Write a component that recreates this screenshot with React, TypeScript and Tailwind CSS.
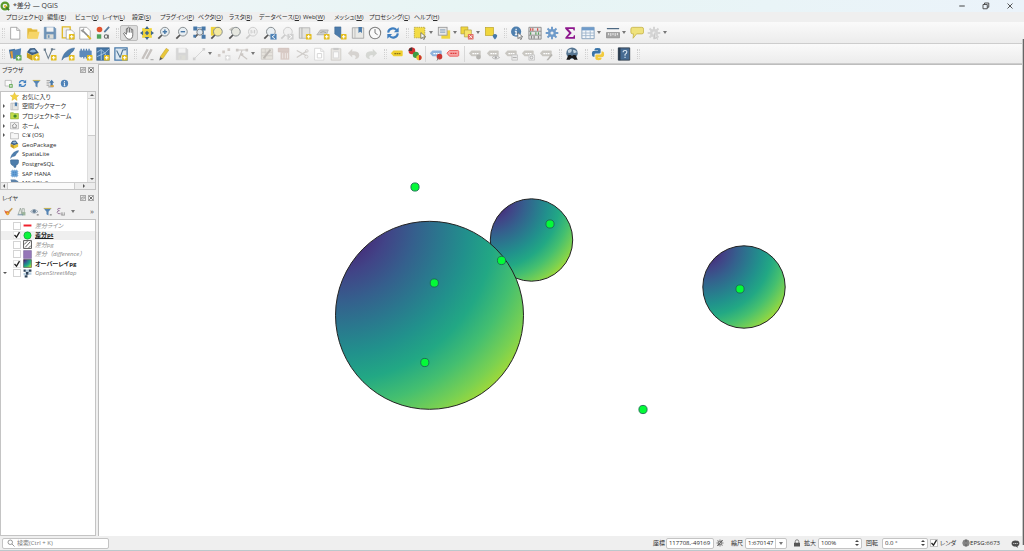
import type { ReactNode } from "react";
import { clsx } from "clsx";

/* ---------- icon primitives ---------- */

function Svg({ children, className = "size-3.5" }: { children: ReactNode; className?: string }) {
  return (
    <svg viewBox="0 0 16 16" className={clsx("block shrink-0", className)} fill="none" aria-hidden="true">
      {children}
    </svg>
  );
}

// yellow "create" badge in the lower right corner
const Badge = ({ color = "#e3bd1f" }: { color?: string }) => (
  <>
    <rect x="9" y="9" width="6.5" height="6.5" rx="1" fill={color} />
    <path d="M12.2 10.2v4M10.2 12.2h4" stroke="#fff" strokeWidth="1.2" />
  </>
);

const Lens = ({ fill = "#e8eef2", stroke = "#858b8f", handle = "#555" }) => (
  <>
    <path d="M6 10 1.5 14.5" stroke={handle} strokeWidth="2" />
    <circle cx="9" cy="6.5" r="5" fill={fill} stroke={stroke} strokeWidth="1.1" />
  </>
);

const Cursor = () => <path d="M9 7.5v7l1.8-1.6 1.3 2.6 1.2-.6-1.2-2.5h2.4z" fill="#fff" stroke="#555" strokeWidth=".8" />;

const Gear = ({ color }: { color: string }) => (
  <>
    <circle cx="8" cy="8" r="4.6" fill={color} />
    <path
      d="M8 .8v14.4M.8 8h14.4M2.9 2.9l10.2 10.2M13.1 2.9 2.9 13.1"
      stroke={color}
      strokeWidth="2.2"
    />
    <circle cx="8" cy="8" r="1.8" fill="#eee" />
  </>
);

const Tag = ({ color = "#c9c7c2", text = "#fff" }) => (
  <>
    <path d="M1 7 4 4h9.500q1 0 1 1v4.500q0 1-1 1H4z" fill={color} />
    <path d="M5 7.500h7" stroke={text} strokeWidth="1.500" strokeDasharray="2 .6" />
  </>
);

const Refresh = () => (
  <g stroke="#3f7fc0" strokeWidth="2.400">
    <path d="M2.500 7.500C3 2.500 9 1.500 12 4.500" />
    <path d="M13.500 8.500C13 13.500 7 14.500 4 11.500" />
    <path d="M14.500 1.500v5.500H9zM1.500 14.500V9H7z" fill="#3f7fc0" stroke="none" />
  </g>
);

const Pencil = ({ body = "#e8c63a", tip = "#555" }) => (
  <>
    <path d="m3.500 11.500 7-10 3 2-7 10z" fill={body} stroke="#b49622" strokeWidth=".5" />
    <path d="m3.500 11.500 3 2-3.800 2z" fill={tip} />
  </>
);

const Floppy = ({ body = "#6f93b7" }) => (
  <>
    <path d="M1.500 1.500h11.500l1.500 1.500v11.500h-13z" fill={body} stroke={body} />
    <path d="M4 1.500h8v5H4z" fill="#f3f3f3" />
    <path d="M4 9.500h8v5H4z" fill="#dcdcd6" />
    <path d="M5.500 10.500h2v3h-2z" fill={body} />
  </>
);

const Feather = () => (
  <path
    d="M1 15C2 9 6 2 15.500 1c-1 3-1.500 4-4 5.500L9.500 10c-2 1.500-4.500 1.500-6 2.200z"
    fill="#4f7fae"
    stroke="#345f8c"
    strokeWidth=".5"
  />
);

const Chip = () => (
  <>
    <path d="M2.500 2v10M5.500 2v11M8.500 2v11M11.500 2v11" stroke="#5580ad" strokeWidth="1.500" />
    <rect x="0.500" y="4" width="14" height="7.500" rx="1" fill="#5d8abb" />
  </>
);

const Package = () => (
  <>
    <path d="M1 6.500 7 9.500v6L1 12z" fill="#c79c1c" />
    <path d="m7 9.500 7.500-3V12L7 15.500z" fill="#e9c83b" />
    <path d="M1 6 4.500 1.500 10 1l4.500 5.500L7 9.500z" fill="#3e5f83" />
    <path d="M4 5q2-3 6-2l1.500 2q-3 2.500-7.500 0" fill="#8fb5da" />
  </>
);

const Elephant = () => (
  <path
    d="M2 1.500h12q1.500 0 1.500 2 0 5-2.500 6.500l-2 .5-.5 4q-1.500 1.500-3.500 0L6 11.500H4Q.5 9 .5 3.500q0-2 1.500-2z"
    fill="#4d7dab"
    stroke="#2f577f"
    strokeWidth=".7"
  />
);

const Page = ({ stroke = "#999" }) => (
  <>
    <path d="M3 1.500h7l3.500 3.500v10H3z" fill="#fff" stroke={stroke} strokeWidth=".9" />
    <path d="M10 1.500V5h3.500" stroke={stroke} strokeWidth=".9" />
  </>
);

const Eye = ({ color = "#667d92" }) => (
  <>
    <path d="M1 8q6.500-7 13 0-6.500 6-13 0z" fill="#e8edf2" stroke={color} />
    <circle cx="7.500" cy="7.500" r="3" fill={color} />
  </>
);

const Funnel = () => (
  <>
    <path d="M1 2h14L9.800 8.500V15l-3.600-2V8.500z" fill="#5584b4" />
    <path d="M1.500 2.500h13" stroke="#d8ba3c" strokeWidth="1.500" />
  </>
);

const Globe = () => (
  <>
    <circle cx="8" cy="8" r="6.500" fill="#aaa" stroke="#555" />
    <path d="M1.500 8h13M8 1.500v13M3 4.500h10M3 11.500h10M8 1.500q-6 6.500 0 13 6-6.500 0-13" stroke="#555" strokeWidth=".9" />
  </>
);

const icons: Record<string, ReactNode> = {
  /* project */
  newProject: <Page />,
  open: (
    <>
      <path d="M1.500 2.500H6L7.500 4H13v10H1.500z" fill="#e2b93b" />
      <path d="M3.500 6.500h12l-2 8h-12z" fill="#f6d568" />
    </>
  ),
  save: <Floppy />,
  layout: (
    <>
      <path d="M1.500 1h9v12.500h-9z" fill="#eee" stroke="#e0b927" strokeWidth="1.500" />
      <path d="M6 4.500h6l3 3V15H6z" fill="#fff" stroke="#999" strokeWidth=".8" />
      <Badge />
    </>
  ),
  layoutManager: (
    <>
      <path d="M2 1.500h8l4 4v9.500H2z" fill="#fff" stroke="#9a9a9a" strokeWidth=".9" />
      <path d="m5 5 7 7" stroke="#8a8a8a" strokeWidth="1.800" />
      <path d="m11 11 3.500 4" stroke="#e0b927" strokeWidth="2.200" />
      <path d="M3.500 4.500 6 7M7 3 5 5" stroke="#999" strokeWidth="1.500" />
    </>
  ),
  style: (
    <>
      <circle cx="4" cy="4" r="3.200" fill="#e0532f" />
      <path d="M15 1 9.500 7" stroke="#557a9c" strokeWidth="2" />
      <rect x="1" y="9.500" width="5" height="5" fill="#4fa35b" />
      <circle cx="11.500" cy="12" r="2" stroke="#666" strokeWidth="1.200" />
      <path d="M14 10v4.500" stroke="#666" strokeWidth="1.200" />
    </>
  ),
  /* navigation */
  hand: (
    <path
      d="M5 9.500V3.200q.9-1.200 1.700 0V2q1-1.300 1.900 0v.900q1-1 1.900.1v1q1-.8 1.800.3V10q0 5-4.200 5.200Q5.500 15.300 4 12L1.800 8.500q.7-1.500 2-.3L5 9.500M6.700 3v4.500M8.600 3v4.500M10.500 4v3.800"
      fill="#fff"
      stroke="#555"
      strokeWidth=".9"
    />
  ),
  panSelection: (
    <>
      <rect x="2.500" y="2.500" width="11" height="11" fill="#efd43b" />
      <path d="M8 0 5.500 3.500h5zM8 16l-2.500-3.500h5zM0 8l3.500-2.500v5zM16 8l-3.500-2.500v5z" fill="#42698e" />
      <path d="M8 5.500 10.500 8 8 10.500 5.500 8z" fill="#42698e" />
    </>
  ),
  zoomIn: (
    <>
      <Lens />
      <path d="M9 4v5M6.500 6.500h5" stroke="#4778a8" strokeWidth="1.600" />
    </>
  ),
  zoomOut: (
    <>
      <Lens />
      <path d="M6.500 6.500h5" stroke="#4778a8" strokeWidth="1.600" />
    </>
  ),
  zoomFull: (
    <>
      <path d="M7 9 3 13" stroke="#555" strokeWidth="1.800" />
      <circle cx="9" cy="7" r="3.500" fill="#dde6ed" stroke="#777" />
      <path d="M1.500 .5H6V5H1.500zM11 .5h4.500V5H11zM11 10h4.500v4.500H11zM1.500 10h3v3h-3z" fill="#4778a8" />
      <path d="M6 2h5M13 5v5" stroke="#4778a8" />
    </>
  ),
  zoomSelection: (
    <>
      <rect x="1" y="1" width="10" height="10" fill="#efd43b" />
      <Lens fill="#f4e9a0" />
    </>
  ),
  zoomLayer: (
    <>
      <path d="M1 4 5 1l6 3-4 4z" fill="#c4c4bd" />
      <Lens fill="#e6e7e0" />
    </>
  ),
  zoomNative: (
    <>
      <Lens fill="#f1f1f1" stroke="#ccc" handle="#ccc" />
      <path d="M7 4.500v4M11 4.500v4M9 5.500v.8M9 7.200v.8" stroke="#c4c4c4" />
    </>
  ),
  zoomLast: (
    <>
      <Lens />
      <rect x="8.500" y="9" width="7" height="6.500" fill="#4f83b6" />
      <path d="m13.500 10-3 2.300 3 2.300" stroke="#fff" strokeWidth="1.100" />
    </>
  ),
  zoomNext: (
    <>
      <Lens fill="#f1f1f1" stroke="#ccc" handle="#ccc" />
      <rect x="8.500" y="9" width="7" height="6.500" fill="#d0d0d0" />
      <path d="m10.500 10 3 2.300-3 2.300" stroke="#fff" strokeWidth="1.100" />
    </>
  ),
  newMap: (
    <>
      <path d="M1.500 2h12v12h-12z" fill="#e2e2df" stroke="#a8a8a8" strokeWidth=".8" />
      <path d="M4.500 2v12" stroke="#aaa" />
      <Badge />
    </>
  ),
  new3d: (
    <>
      <path d="M1 10 5 4.500h9L12 10z" fill="#cfcfcc" stroke="#a8a8a8" strokeWidth=".8" />
      <path d="M5 7.500q3-2 6.500 0" stroke="#9f9f9c" />
      <Badge />
    </>
  ),
  newBookmark: (
    <>
      <path d="M2 1h7v13l-3.500-2.500L2 9z" fill="#4b7bab" stroke="#345f8c" strokeWidth=".6" />
      <Badge />
    </>
  ),
  bookmarks: (
    <>
      <path d="M1.500 2h13v12h-13z" fill="#e9e9e6" stroke="#9d9d9d" strokeWidth=".9" />
      <path d="M4.500 2v12" stroke="#bbb" />
      <path d="M8.500 1h4v7l-2-1.500-2 1.500z" fill="#4b7bab" />
    </>
  ),
  clock: (
    <>
      <circle cx="8" cy="8" r="6.500" fill="#fafafa" stroke="#808080" strokeWidth="1.200" />
      <path d="M8 3.500V8l3 2" stroke="#777" strokeWidth="1.100" />
    </>
  ),
  refresh: <Refresh />,
  /* selection + attributes */
  select: (
    <>
      <rect x="1.500" y="1.500" width="12" height="12" fill="#f3dc45" stroke="#b4a138" strokeDasharray="1.500 1" />
      <Cursor />
    </>
  ),
  selectValue: (
    <>
      <rect x="5" y="5" width="10" height="9.500" fill="#f0d63c" />
      <rect x="1.500" y="1.500" width="10" height="9" fill="#e8e8e8" stroke="#999" />
      <path d="M3.500 4.500h6M3.500 7h6" stroke="#6d8fae" />
    </>
  ),
  deselect: (
    <>
      <path d="M1 1h8v8H1z" fill="#f0d63c" stroke="#a9983a" strokeWidth=".7" />
      <path d="M5 4.500h8v8H5z" fill="#f6e36b" stroke="#a9983a" strokeWidth=".7" />
      <rect x="9" y="9" width="6.500" height="6.500" rx="1" fill="#df6a62" />
      <path d="m10.500 10.500 3.500 3.500M14 10.500 10.500 14" stroke="#fff" />
    </>
  ),
  selectLocation: (
    <>
      <rect x="1.500" y="1.500" width="9.500" height="9.500" fill="#f0d63c" stroke="#b6a02c" strokeWidth=".7" />
      <path d="M12.500 15.500q-3-3.500-2.500-5 2.500-2.500 5 0 .500 1.500-2.500 5z" fill="#4778a8" />
    </>
  ),
  identify: (
    <>
      <circle cx="7" cy="6.500" r="5.800" fill="#4e7fae" />
      <path d="M7 3v1.500M5.500 6H7v4M5.500 10h3.200" stroke="#fff" strokeWidth="1.400" />
      <Cursor />
    </>
  ),
  calculator: (
    <>
      <path d="M1 1.500h14v13.500H1z" fill="#e4e4e4" stroke="#888" />
      <path d="M1 6h14M1 10.500h14" stroke="#888" />
      <path d="M3 2.500v3M5.500 2.500v3M11 2.500v3" stroke="#d5524b" strokeWidth="1.400" />
      <path d="M3 7v3M9 7v3M12 7v3" stroke="#5c9d60" strokeWidth="1.400" />
      <path d="M4 11.500v3M7 11.500v3M12 11.500v3" stroke="#888" strokeWidth="1.400" />
    </>
  ),
  toolbox: <Gear color="#6f9bca" />,
  sigma: (
    <path
      d="M2.500 1.500h11v3.500h-1.300L11.500 3.500H6l4 4.500-4.300 4.500h6l.8-1.800h1.200v3.800h-11v-1.500L7 8 2.500 3z"
      fill="#8d168d"
    />
  ),
  table: (
    <>
      <path d="M1 1.500h14v13H1z" fill="#f4f7fa" stroke="#7f9bb8" />
      <path d="M1 1.500h14v3.500H1z" fill="#6f9bca" />
      <path d="M1 8h14M1 11h14M5.500 5v9.500M10.500 5v9.500" stroke="#9db5cc" />
    </>
  ),
  measure: (
    <>
      <path d="M1 3h14" stroke="#4e6983" strokeWidth="1.400" />
      <path d="M.5 7.500h15v6H.5z" fill="#a5a5a5" stroke="#888" strokeWidth=".8" />
      <path d="M3 8v2.500M5.500 8v3.500M8 8v2.500M10.500 8v3.500M13 8v2.500" stroke="#f2f2f2" />
    </>
  ),
  mapTips: (
    <path
      d="M3 1.500h10.500q2 0 2 2v3.500q0 2-2 2H7.500L3.500 14l.5-5H3q-2 0-2-2V3.500q0-2 2-2z"
      fill="#efe27c"
      stroke="#c4b148"
      strokeWidth=".9"
    />
  ),
  actions: (
    <>
      <Gear color="#d4d4d4" />
      <path d="M9 7.500v7l1.800-1.600 1.300 2.600" fill="#f3f3f3" stroke="#bbb" />
    </>
  ),
  /* layers */
  dataSource: (
    <>
      <path d="m1 3 7-1 1 9-6 2z" fill="#47739f" />
      <path d="m2.500 5 8-1.500V11L4 13z" fill="#e09b3a" />
      <path d="m5 4 10-2.500L14 12l-8 2z" fill="#4f81b4" />
      <Badge color="#64a956" />
    </>
  ),
  newGeoPackage: (
    <>
      <Package />
      <Badge />
    </>
  ),
  newShape: (
    <>
      <path d="m2 3 4 10L10.500 2.500H14" stroke="#6d7f8e" strokeWidth="1.200" />
      <path d="M.8 1.800h2.600v2.600H.8zM9 1.500h2.500V4H9z" fill="#6d7f8e" />
      <Badge />
    </>
  ),
  newSpatialite: (
    <>
      <Feather />
      <Badge />
    </>
  ),
  newVirtual: (
    <>
      <Chip />
      <Badge />
    </>
  ),
  newMesh: (
    <>
      <rect x="1" y="1" width="14" height="14" fill="#4778a8" stroke="#38618a" />
      <path d="m1 6 5-3 4 4 5-5M6 3v12M1 11l9-4 4 8" stroke="#a9c8e5" />
      <Badge />
    </>
  ),
  newGpx: (
    <>
      <rect x="1" y="1" width="14" height="14" fill="#dce8f2" stroke="#4778a8" strokeWidth="1.400" />
      <path d="m3 4 4 8 3-8.500 4-.5" stroke="#4b7190" strokeWidth="1.200" />
      <Badge />
    </>
  ),
  /* digitizing */
  edits: (
    <>
      <path d="m1.500 13 6-11 2.500 1-6 11zM6 13l6-11 2.500 1-6 11z" fill="#c6c2bf" />
      <path d="M12 14.500h3.500" stroke="#999" />
    </>
  ),
  pencil: <Pencil />,
  saveEdits: <Floppy body="#d6d6d6" />,
  line: (
    <>
      <path d="m2.500 13.500 11-11" stroke="#d2d2d2" />
      <path d="M1 12h3v3H1zM12 1h3v3h-3z" fill="#d0d0d0" />
    </>
  ),
  points: (
    <>
      <path d="M1 8h3v3H1zM6 4h3v3H6zM12 1.500h3v3h-3z" fill="#d0cac6" />
      <rect x="9" y="9" width="6.500" height="6.500" rx="1" fill="#ddd" />
      <path d="M12.200 10.200v4M10.200 12.200h4" stroke="#fff" strokeWidth="1.200" />
    </>
  ),
  vertex: (
    <>
      <path d="M2 3.500h11M4 14 8 4M6 8l8 6" stroke="#cbc7c4" strokeWidth="1.200" />
      <path d="M1 2h3v3H1zM12 2h3v3h-3zM6.500 7h3v3h-3z" fill="#cbc7c4" />
    </>
  ),
  editAttributes: (
    <>
      <path d="M1.500 2h13v12h-13z" fill="#e5e2dc" stroke="#cfccc7" />
      <path d="M1.500 6h13M1.500 10h13M6 2v12" stroke="#cfccc7" />
      <path d="m4 13 8-10" stroke="#bcb8b3" strokeWidth="2" />
    </>
  ),
  trash: (
    <>
      <path d="M1.500 1.500h12v4h-12z" fill="#d9cbc6" stroke="#d0c0bb" />
      <path d="M4 5.500h10v9H4z" fill="#d9cbc6" />
      <path d="M6.500 7v6M9.500 7v6M12 7v6" stroke="#f0eae8" />
    </>
  ),
  cut: (
    <>
      <path d="m2 4 11 6M2 12 13 5" stroke="#cfccc9" strokeWidth="1.400" />
      <circle cx="13" cy="11" r="1.800" stroke="#cfccc9" />
      <circle cx="13.500" cy="4.500" r="1.500" stroke="#cfccc9" />
    </>
  ),
  copy: (
    <>
      <Page stroke="#d2d2d2" />
      <path d="M6 7.500h5v5H6z" stroke="#d2d2d2" />
    </>
  ),
  paste: (
    <>
      <path d="M2.500 2h11v13h-11z" fill="#e9e7e4" stroke="#cecbc7" />
      <path d="M5 5.500h6v7H5z" fill="#fafafa" stroke="#d6d6d6" />
      <path d="M5 1h6v2.500H5z" fill="#c9c9c9" />
    </>
  ),
  undo: <path d="M6 2v3q8-.5 8 4.500 0 4-5 4.500 3-5-3-5v3L1 7z" fill="#d6d3d0" />,
  redo: <path d="M10 2v3Q2 4.500 2 9.500 2 13.500 7 14 4 9 10 9v3l5-5z" fill="#d5d7d3" />,
  /* labels */
  labelYellow: <Tag color="#efcf2f" text="#8c7418" />,
  diagrams: (
    <>
      <circle cx="4.500" cy="4.500" r="3.800" fill="#d3302f" />
      <path d="M4.500 4.500h-4A4 4 0 0 1 5 .7z" fill="#3a3a3a" />
      <circle cx="9" cy="9" r="3.500" fill="#3d9d45" />
      <path d="M9.500 12a3 3 0 1 1 6 0 3 3 0 0 1-6 0" fill="#eac22e" />
      <path d="M12.500 12v-3a3 3 0 0 1 0 6z" fill="#c93632" />
    </>
  ),
  labelPin: (
    <>
      <Tag color="#8fb4dd" />
      <circle cx="12" cy="11" r="3.200" fill="#c93834" />
      <path d="m11 12-2 3.500" stroke="#777" />
    </>
  ),
  labelRed: (
    <>
      <path d="M1 7 4 4h9.500q1 0 1 1v4.500q0 1-1 1H4z" fill="#f6a6a6" stroke="#ec5858" />
      <path d="M5 7.300h7" stroke="#e03f3f" strokeWidth="1.600" strokeDasharray="2 .6" />
    </>
  ),
  tagPin: (
    <>
      <Tag />
      <circle cx="12" cy="11.500" r="2.800" fill="#b5b4b1" />
    </>
  ),
  tagEye: (
    <>
      <Tag />
      <path d="M7 12q4-4 8.500 0-4.500 3.500-8.500 0" fill="#eee" stroke="#b5b5b5" />
      <circle cx="11.200" cy="12" r="1.300" fill="#a5a5a5" />
    </>
  ),
  tagMove: (
    <>
      <Tag />
      <path d="M9 9h6.500v6H9z" fill="#e8e8e8" stroke="#c3c3c3" />
      <path d="M10 12h4.500" stroke="#aaa" />
    </>
  ),
  tagRotate: (
    <>
      <Tag />
      <path d="M9 9h6.500v6H9z" fill="#eee" stroke="#c6c6c6" />
      <circle cx="12" cy="12" r="1.600" stroke="#aaa" />
    </>
  ),
  tagEdit: (
    <>
      <Tag />
      <path d="m8.500 15 5.500-7 1.700 1.200L10.500 15z" fill="#b5b3af" />
    </>
  ),
  /* plugins */
  metasearch: (
    <>
      <circle cx="8" cy="7" r="6.500" fill="#567591" />
      <path d="M3 4q3-3 5-1L7 6l-3 1zM9 3q4 0 4.500 3L10 7z" fill="#c4d5e2" />
      <path d="M4 9h2.500l1 1h1l1-1H12l2.500 5.500h-4L9 12.500H7l-1.500 2h-4z" fill="#191919" />
    </>
  ),
  python: (
    <>
      <path d="M4 4V2.500Q4 1 7.500 1T11 2.500V6q0 1.500-1.500 1.500h-4Q4 7.500 4 9v2H2.500Q1 11 1 7.800T2.500 4.500H8V4z" fill="#3a74a8" />
      <path d="M12 12v1.500q0 1.500-3.500 1.500T5 13.500V10q0-1.500 1.500-1.500h4Q12 8.500 12 7V5h1.500Q15 5 15 8.200t-1.500 3.300H8v.5z" fill="#f2cb3e" />
    </>
  ),
  help: (
    <>
      <path d="M1.500 1h13v14h-13z" fill="#466b92" stroke="#333f4c" />
      <path d="M1.500 1H4v14H1.500z" fill="#2c3e50" />
      <path d="M7 6q0-2 2.200-2t2 2q0 1-2 2.500V10M9.200 11v1.500" stroke="#dfeaf3" strokeWidth="1.200" />
    </>
  ),
  /* panels */
  addLayer: (
    <>
      <path d="M2 2.500h11v10H2z" fill="#fafafa" stroke="#999" />
      <Badge color="#64a956" />
    </>
  ),
  filter: <Funnel />,
  collapse: (
    <>
      <path d="M1 3h6M1 7h5M1 11h5M4 14h9" stroke="#888" strokeWidth="1.500" />
      <path d="m10 1.500 4.500 5H12V13H8V6.500H5.500z" fill="#4778a8" />
      <path d="M8 11h6v3H8z" fill="#e0a53c" />
    </>
  ),
  info: (
    <>
      <circle cx="8" cy="8" r="6.500" fill="#4f83b8" />
      <path d="M8 3.500v2M6.500 7H8v5M6.500 12h3" stroke="#fff" strokeWidth="1.500" />
    </>
  ),
  styling: (
    <>
      <path d="m6 9 8-7.500L15.500 3 9 11z" fill="#c49a52" />
      <path d="m.5 5 3 3L6 7l4 4-3 3.500q-5-.5-6.500-9.500" fill="#e0602c" />
      <path d="m4 11 3 3.500L9 12 6 9z" fill="#efc334" />
    </>
  ),
  addGroup: (
    <>
      <path d="M2 13 6 2l3 11zM9 3h4v10H9z" fill="#e7ebe6" stroke="#7f8c82" />
      <path d="M9 9h6v6H9z" fill="#9bb49a" />
      <path d="M1 14h10" stroke="#4778a8" />
    </>
  ),
  visibility: (
    <>
      <Eye />
      <path d="M12 14h3.500" stroke="#444" strokeWidth="1.400" />
    </>
  ),
  filterLegend: (
    <>
      <Funnel />
      <path d="M12 14h3.500" stroke="#444" strokeWidth="1.400" />
    </>
  ),
  expression: (
    <>
      <path d="M8 2.500Q2 1.500 3 5q1 1.500 3 1.500-4 0-4 3T8 12" stroke="#8b6390" strokeWidth="1.400" />
      <path d="M9.500 9.500v5M9.500 14.500h6M12 9.500v5M15 9.500v5" stroke="#777" />
    </>
  ),
  /* browser tree */
  star: (
    <path
      d="m8 .8 2.200 4.800 5.200.6-3.900 3.500 1.100 5.200L8 12.200l-4.600 2.700 1.100-5.200L.6 6.200l5.200-.6z"
      fill="#f5d33e"
      stroke="#d2ac22"
      strokeWidth=".7"
    />
  ),
  projectHome: (
    <>
      <path d="M1 3h5l1.500 1.500H15V14H1z" fill="#c3dc4a" stroke="#86a52c" />
      <circle cx="9" cy="9" r="3" fill="#3f8a2b" />
    </>
  ),
  home: (
    <>
      <path d="M1 2.500h14v11.500H1z" fill="#f3f3f3" stroke="#999" />
      <path d="m3.500 8.500 4.500-4 4.500 4M5 8v4h6V8" stroke="#666" strokeWidth="1.100" />
    </>
  ),
  folder: <path d="M1 3h5l1.500 1.500H15V14H1z" fill="#f7f7f7" stroke="#999" />,
  geopackage: <Package />,
  feather: <Feather />,
  elephant: <Elephant />,
  hana: (
    <>
      <path d="M2.500 2.500h11v11h-11z" fill="#4c8bc8" />
      <path d="M1 4.500h14M1 8h14M1 11.500h14M4.500 1v14M8 1v14M11.500 1v14" stroke="#6fa6d8" />
    </>
  ),
  mssql: <path d="M1 1h8l6 3-2 4 1 7H5L3 9z" fill="#5d82a8" />,
  /* status bar */
  extents: (
    <>
      <Gear color="#8a8a8a" />
      <path d="m3 14 10-12" stroke="#444" strokeWidth="1.600" />
    </>
  ),
  lock: (
    <>
      <path d="M4.500 8V5q0-3.500 3.500-3.500T11.500 5v3" stroke="#777" strokeWidth="1.800" />
      <path d="M2 7.500h12V15H2z" fill="#555" />
    </>
  ),
  globe: <Globe />,
  message: (
    <>
      <path d="M1 8q0-5.500 7-5.500T15 8q0 3.500-3.500 4.700l1 2.800-4-2Q1 13.500 1 8z" fill="#4d4d4d" />
      <path d="M4 8h2M7 8h2M10 8h2" stroke="#ddd" strokeWidth="1.600" />
    </>
  ),
};

/* ---------- toolbars ---------- */

// a trailing "+" on the key adds a drop-down arrow
function ToolButton({ name, active }: { name: string; active?: boolean }) {
  const key = name.replace("+", "");
  return (
    <button type="button" aria-label={key} className="relative flex shrink-0 items-center">
      {active && <span className="absolute -inset-x-0.5 -inset-y-px rounded-xs border border-[#bdbdbd] bg-[#dcdcdc]" />}
      <span className="relative">
        <Svg>{icons[key]}</Svg>
      </span>
      {name.endsWith("+") && <Arrow />}
    </button>
  );
}

const Arrow = () => (
  <span className="flex w-2 justify-center">
    <span className="border-x-2 border-t-3 border-x-transparent border-t-[#777]" />
  </span>
);

function Group({ names, className, active }: { names: string[]; className: string; active?: string }) {
  return (
    <div className={clsx("flex shrink-0 items-center justify-between", className)}>
      {names.map((name) => (
        <ToolButton key={name} name={name} active={name === active} />
      ))}
    </div>
  );
}

const Grip = () => (
  <span className="flex w-3 shrink-0 gap-px pl-1.5">
    <span className="h-2.5 border-l border-dotted border-[#cfcfcf]" />
    <span className="h-2.5 border-l border-dotted border-[#d8d8d8]" />
  </span>
);

const Divider = ({ className }: { className: string }) => (
  <span className={clsx("flex shrink-0 justify-center", className)}>
    <span className="h-4 border-l border-[#d8d8d8]" />
  </span>
);

function Toolbars() {
  const bar = "flex items-center overflow-hidden border-b border-[#cdcdcd] bg-linear-to-b from-[#fafafa] to-[#ececec]";
  return (
    <>
      <div role="toolbar" className={clsx(bar, "-ml-1 h-[22px]")}>
        <Grip />
        <Group className="w-[102px]" names={["newProject", "open", "save", "layout", "layoutManager", "style"]} />
        <Grip />
        <Group
          className="w-[278px]"
          active="hand"
          names={[
            "hand", "panSelection", "zoomIn", "zoomOut", "zoomFull", "zoomSelection", "zoomLayer", "zoomNative",
            "zoomLast", "zoomNext", "newMap", "new3d", "newBookmark", "bookmarks", "clock", "refresh",
          ]}
        />
        <Grip />
        <Group className="ml-px w-[85px]" names={["select+", "selectValue+", "deselect+", "selectLocation"]} />
        <Grip />
        <Group className="w-[67px]" names={["identify", "calculator", "toolbox", "sigma"]} />
        <Group className="ml-1 w-[88px]" names={["table+", "measure+", "mapTips", "actions+"]} />
      </div>
      <div role="toolbar" className={clsx(bar, "-ml-1 h-5")}>
        <Grip />
        <Group
          className="w-[120px]"
          names={["dataSource", "newGeoPackage", "newShape", "newSpatialite", "newVirtual", "newMesh", "newGpx"]}
        />
        <Grip />
        <Group
          className="w-[238px]"
          names={[
            "edits", "pencil", "saveEdits", "line+", "points", "vertex+", "editAttributes", "trash", "cut", "copy",
            "paste", "undo", "redo",
          ]}
        />
        <Grip />
        <Group className="w-8" names={["labelYellow", "diagrams"]} />
        <Divider className="w-[7px]" />
        <Group className="w-[31px]" names={["labelPin", "labelRed"]} />
        <Divider className="w-2" />
        <Group className="w-[85px]" names={["tagPin", "tagEye", "tagMove", "tagRotate", "tagEdit"]} />
        <Grip />
        <ToolButton name="metasearch" />
        <Grip />
        <ToolButton name="python" />
        <Grip />
        <ToolButton name="help" />
        <Grip />
      </div>
    </>
  );
}

/* ---------- title + menu ---------- */

const MENUS = [
  { label: "プロジェクト", hotkey: "J", width: "w-[41px]" },
  { label: "編集", hotkey: "E", width: "w-7" },
  { label: "ビュー", hotkey: "V", width: "w-[27px]" },
  { label: "レイヤ", hotkey: "L", width: "w-[30px]" },
  { label: "設定", hotkey: "S", width: "w-7" },
  { label: "プラグイン", hotkey: "P", width: "w-[38px]" },
  { label: "ベクタ", hotkey: "O", width: "w-[31px]" },
  { label: "ラスタ", hotkey: "R", width: "w-[30px]" },
  { label: "データベース", hotkey: "D", width: "w-11" },
  { label: "Web", hotkey: "W", width: "w-[31px]" },
  { label: "メッシュ", hotkey: "M", width: "w-[35px]" },
  { label: "プロセシング", hotkey: "C", width: "w-[45px]" },
  { label: "ヘルプ", hotkey: "H", width: "w-[30px]" },
];

function TitleBar() {
  return (
    <header className="flex h-3 items-center bg-linear-to-r from-[#f0f5f8] via-[#e7f5f4] to-[#ebf3fa] text-[7px]">
      <svg viewBox="0 0 16 16" className="size-2.5" fill="none" aria-hidden="true">
        <circle cx="8" cy="8" r="5.500" stroke="#5b9a2c" strokeWidth="3.500" />
        <path d="m8 8 6.500 6.500" stroke="#3f7d22" strokeWidth="3" />
        <path d="m7 7 3 3" stroke="#e9b52c" strokeWidth="3" />
      </svg>
      <h1 className="ml-[3px] leading-3 text-[#333]">*差分 — QGIS</h1>
      <div className="ml-auto flex items-center gap-4 pr-2.5 text-[#444]">
        <button type="button" aria-label="最小化">
          <Svg className="size-2"><path d="M2.500 8h11" stroke="currentColor" strokeWidth="2" /></Svg>
        </button>
        <button type="button" aria-label="元に戻す">
          <Svg className="size-2">
            <path d="M2 5h8.500v8.500H2zM5 5V2h8.500v8.500h-3" stroke="currentColor" strokeWidth="1.800" />
          </Svg>
        </button>
        <button type="button" aria-label="閉じる">
          <Svg className="size-2"><path d="m3 3 10 10M13 3 3 13" stroke="currentColor" strokeWidth="1.800" /></Svg>
        </button>
      </div>
    </header>
  );
}

function MenuBar() {
  return (
    <nav className="flex h-2.5 items-center bg-[#efefef] pl-1.5 text-[6px]">
      {MENUS.map((m) => (
        <button
          key={m.hotkey}
          type="button"
          className={clsx("shrink-0 text-left leading-2.5 whitespace-nowrap [font-feature-settings:'palt']", m.width)}
        >
          {m.label}(<u>{m.hotkey}</u>)
        </button>
      ))}
    </nav>
  );
}

/* ---------- docks ---------- */

function DockTitle({ children }: { children: string }) {
  return (
    <div className="flex h-[11px] items-center pr-0.5 pl-0.5">
      <h2 className="text-[6px] leading-2.5 [font-feature-settings:'palt']">{children}</h2>
      <div className="ml-auto flex gap-0.5">
        <button type="button" aria-label="フロート" className="border border-[#aaa]">
          <Svg className="size-1"><path d="M2 6h7v7H2zM6 3h8v8" stroke="#777" strokeWidth="2" /></Svg>
        </button>
        <button type="button" aria-label="パネルを閉じる" className="border border-[#aaa]">
          <Svg className="size-1"><path d="m1 1 14 14M15 1 1 15" stroke="#444" strokeWidth="3" /></Svg>
        </button>
      </div>
    </div>
  );
}

const BROWSER_ITEMS = [
  { icon: "star", label: "お気に入り" },
  { icon: "bookmarks", label: "空間ブックマーク", branch: true },
  { icon: "projectHome", label: "プロジェクトホーム", branch: true },
  { icon: "home", label: "ホーム", branch: true },
  { icon: "folder", label: "C:¥ (OS)", branch: true },
  { icon: "geopackage", label: "GeoPackage" },
  { icon: "feather", label: "SpatiaLite" },
  { icon: "elephant", label: "PostgreSQL" },
  { icon: "hana", label: "SAP HANA" },
  { icon: "mssql", label: "MS SQL Server" },
];

function PanelButton({ name }: { name: string }) {
  return (
    <button type="button" aria-label={name}>
      <Svg className="size-[9px]">{icons[name]}</Svg>
    </button>
  );
}

function BrowserPanel() {
  return (
    <section>
      <DockTitle>ブラウザ</DockTitle>
      <div className="flex h-4 items-center gap-[5px] pl-1">
        {["addLayer", "refresh", "filter", "collapse", "info"].map((name) => (
          <PanelButton key={name} name={name} />
        ))}
      </div>
      <div className="border border-[#c4c4c4] bg-white">
        <div className="flex h-[90px]">
          <div className="min-w-0 flex-1 overflow-hidden">
            <ul className="grid h-24 grid-rows-10">
              {BROWSER_ITEMS.map((item) => (
                <li key={item.label} className="flex items-center whitespace-nowrap">
                  <span className="flex w-[9px] pl-0.5">
                    {item.branch && <span className="border-y-2 border-l-2 border-y-transparent border-l-[#555]" />}
                  </span>
                  <Svg className="size-[9px]">{icons[item.icon]}</Svg>
                  <span className="ml-[3px] text-[6px] leading-2 [font-feature-settings:'palt']">{item.label}</span>
                </li>
              ))}
            </ul>
          </div>
          <div className="flex w-2 flex-col items-center justify-between border-l border-[#ddd] bg-[#ededed] py-0.5">
            <span className="border-x-2 border-b-2 border-x-transparent border-b-[#555]" />
            <span className="mt-0.5 mb-auto h-[38px] w-full border-y border-[#ccc] bg-[#fafafa]" />
            <span className="border-x-2 border-t-2 border-x-transparent border-t-[#555]" />
          </div>
        </div>
        <div className="flex h-[7px] items-center border-t border-[#ccc] bg-[#ededed] px-0.5">
          <span className="border-y-2 border-r-2 border-y-transparent border-r-[#555]" />
          <span className="ml-0.5 h-full w-[68px] border-x border-[#ccc] bg-[#fafafa]" />
          <span className="mr-2 ml-auto border-y-2 border-l-2 border-y-transparent border-l-[#555]" />
        </div>
      </div>
    </section>
  );
}

type Layer = { label: string; checked: boolean; swatch: ReactNode; selected?: boolean; expanded?: boolean };

const LAYERS: Layer[] = [
  { label: "差分ライン", checked: false, swatch: <path d="M1 8h14" stroke="#f0202c" strokeWidth="3.500" /> },
  {
    label: "差分pt",
    checked: true,
    selected: true,
    swatch: <circle cx="8" cy="8" r="6.500" fill="#0cf53c" stroke="#17803a" />,
  },
  {
    label: "差分pg",
    checked: false,
    swatch: <path d="M1 1h14v14H1zM2 8l6-6M4 13 13 3M10 14l4-4" fill="#fff" stroke="#333" strokeWidth="1.400" />,
  },
  { label: "差分（difference）", checked: false, swatch: <path d="M1 1h14v14H1z" fill="#9577b8" stroke="#77659a" /> },
  { label: "オーバーレイpg", checked: true, swatch: <path d="M1 1h14v14H1z" fill="url(#viridis)" stroke="#333" /> },
  {
    label: "OpenStreetMap",
    checked: false,
    expanded: true,
    swatch: (
      <>
        <path d="M1 1h4v4H1zM5 5h5v5H5zM10 1h5v4h-5zM3 11h5v4H3z" fill="#2d4258" />
        <path d="M5 1h5v4H5zM10 6h5v4h-5zM1 7h4v4H1z" fill="#b5cde0" />
      </>
    ),
  },
];

const Check = () => (
  <svg viewBox="0 0 8 8" className="pointer-events-none absolute inset-0 size-full" fill="none" aria-hidden="true">
    <path d="m1.500 4 2 2.200 3-5" stroke="#222" strokeWidth="1.300" />
  </svg>
);

function LayersPanel() {
  return (
    <section className="flex flex-1 flex-col">
      <DockTitle>レイヤ</DockTitle>
      <div className="flex h-4 items-center gap-1 pl-1">
        {["styling", "addGroup", "visibility", "filterLegend", "expression"].map((name) => (
          <PanelButton key={name} name={name} />
        ))}
        <Arrow />
        <button type="button" className="mr-0.5 ml-auto text-[8px] leading-2 text-[#555]">»</button>
      </div>
      <div className="flex-1 border border-[#c4c4c4] bg-white pt-px">
        <ul className="grid h-[57px] grid-rows-6">
          {LAYERS.map((layer) => (
            <li key={layer.label} className={clsx("flex items-center", layer.selected && "bg-[#efefef]")}>
              <span className="w-3 pl-0.5">
                {layer.expanded && (
                  <span className="block w-0 border-x-2 border-t-2 border-x-transparent border-t-[#555]" />
                )}
              </span>
              <label className="flex items-center whitespace-nowrap">
                <span className="relative block size-2">
                  <input
                    type="checkbox"
                    defaultChecked={layer.checked}
                    className={clsx(
                      "block size-2 appearance-none border bg-white",
                      layer.checked ? "border-[#e4e4e4]" : "border-[#d4d4d4]"
                    )}
                  />
                  {layer.checked && <Check />}
                </span>
                <Svg className="ml-0.5 size-[9px]">{layer.swatch}</Svg>
                {/* full-width brackets keep their own spacing */}
                <span
                  className={clsx(
                    "ml-[3px] text-[6px] leading-2",
                    !layer.label.includes("（") && "[font-feature-settings:'palt']",
                    layer.checked ? "font-bold text-[#222]" : "text-[#888] italic",
                    layer.selected && "underline"
                  )}
                >
                  {layer.label}
                </span>
              </label>
            </li>
          ))}
        </ul>
      </div>
    </section>
  );
}

/* ---------- map ---------- */

// coordinates are relative to the canvas origin
const POLYGONS = [
  { cx: 432.5, cy: 175, r: 41.2 },
  { cx: 330.5, cy: 250.3, r: 94 },
  { cx: 645, cy: 222, r: 41.2 },
];

const POINTS = [
  [316, 122],
  [451, 159],
  [402.5, 195.5],
  [335.3, 218],
  [325.8, 297.5],
  [641, 224],
  [544, 344.5],
];

const VIRIDIS = ["#440154", "#482475", "#414487", "#355f8d", "#2a788e", "#21918c", "#22a884", "#44bf70", "#7ad151", "#bddf26", "#fde725"];

function MapCanvas() {
  return (
    <main className="min-w-0 flex-1 border-t border-l border-[#bdbdbd] bg-white">
      <svg className="block size-full" role="img" aria-label="地図">
        <defs>
          <radialGradient id="viridis" cx="0" cy="0" r="1.414">
            {VIRIDIS.map((color, i) => (
              <stop key={color} offset={i / 10} stopColor={color} />
            ))}
          </radialGradient>
        </defs>
        {POLYGONS.map((p) => (
          <circle key={p.cx} {...p} fill="url(#viridis)" stroke="#232323" strokeWidth="1" />
        ))}
        {POINTS.map(([cx, cy]) => (
          <circle key={cx} cx={cx} cy={cy} r="4.100" fill="#04fa38" stroke="#1d6b52" strokeWidth=".9" />
        ))}
      </svg>
    </main>
  );
}

/* ---------- status bar ---------- */

const Stepper = () => (
  <span className="flex w-[7px] flex-col items-center gap-0.5">
    <span className="border-x-2 border-b-2 border-x-transparent border-b-[#444]" />
    <span className="border-x-2 border-t-2 border-x-transparent border-t-[#444]" />
  </span>
);

function StatusBar() {
  const box = "flex h-[11px] items-center rounded-xs border border-[#c4c4c4] bg-white";
  const field = "h-full min-w-0 flex-1 bg-transparent pl-0.5 leading-2 outline-none";
  return (
    <footer className="flex h-[15px] shrink-0 items-center border-b border-[#bcc8cc] bg-[#efefef] pr-1 pl-0.5 text-[6px]">
      <label className={clsx(box, "w-[107px] pl-1")}>
        <Svg className="size-2">
          <circle cx="6.500" cy="6.500" r="4.500" stroke="#777" strokeWidth="1.500" />
          <path d="m10 10 5 5" stroke="#777" strokeWidth="1.500" />
        </Svg>
        <input aria-label="検索" placeholder="検索(Ctrl + K)" className={clsx(field, "placeholder:text-[#777]")} />
      </label>

      <div className="ml-auto flex items-center">
        <label htmlFor="coord">座標</label>
        <span className={clsx(box, "ml-px w-12")}>
          <input id="coord" defaultValue="117708,-49169" className={field} />
        </span>
        <button type="button" aria-label="範囲" className="mx-0.5 w-2">
          <Svg className="size-2">{icons.extents}</Svg>
        </button>
        <label htmlFor="scale" className="ml-[5px]">縮尺</label>
        <span className={clsx(box, "relative ml-0.5 w-[42px]")}>
          <select id="scale" className={clsx(field, "appearance-none pr-2.5")}>
            <option>1:670147</option>
          </select>
          <span className="pointer-events-none absolute inset-y-0 right-0 flex items-center border-l border-[#ccc] px-px">
            <Arrow />
          </span>
        </span>
        <button type="button" aria-label="縮尺をロック" className="ml-1.5">
          <Svg className="size-2">{icons.lock}</Svg>
        </button>
        <label htmlFor="magnifier" className="ml-[3px]">拡大</label>
        <span className={clsx(box, "ml-0.5 w-11")}>
          <input id="magnifier" defaultValue="100%" className={field} />
          <Stepper />
        </span>
        <label htmlFor="rotation" className="ml-1">回転</label>
        <span className={clsx(box, "ml-1 w-[46px]")}>
          <input id="rotation" defaultValue="0.0 °" className={field} />
          <Stepper />
        </span>
        <label className="ml-0.5 flex items-center gap-0.5 [font-feature-settings:'palt']">
          <span className="relative block size-2">
            <input type="checkbox" defaultChecked className="block size-2 appearance-none border border-[#c4c4c4] bg-white" />
            <Check />
          </span>
          レンダ
        </label>
        <button type="button" className="ml-1.5 flex items-center">
          <Svg className="size-2">{icons.globe}</Svg>
          EPSG:6673
        </button>
        <button type="button" aria-label="メッセージ" className="ml-[11px]">
          <Svg className="size-[9px]">{icons.message}</Svg>
        </button>
      </div>
    </footer>
  );
}

export default function App() {
  return (
    <div className="relative flex h-screen flex-col overflow-hidden bg-[#efefef] font-['Open_Sans','Noto_Sans_CJK_JP',sans-serif] text-[#2b2b2b]">
      <TitleBar />
      <MenuBar />
      <Toolbars />
      <div className="flex min-h-0 flex-1">
        <aside className="flex w-24 shrink-0 flex-col gap-0.5">
          <BrowserPanel />
          <LayersPanel />
        </aside>
        <div className="w-0.5 shrink-0" />
        <MapCanvas />
      </div>
      <StatusBar />
      {/* window edge, lies over the toolbars and the map */}
      <span className="absolute top-[39px] right-0 bottom-1.5 w-0.5 border-r border-[#666] bg-[#c8c8c8]" />
    </div>
  );
}
